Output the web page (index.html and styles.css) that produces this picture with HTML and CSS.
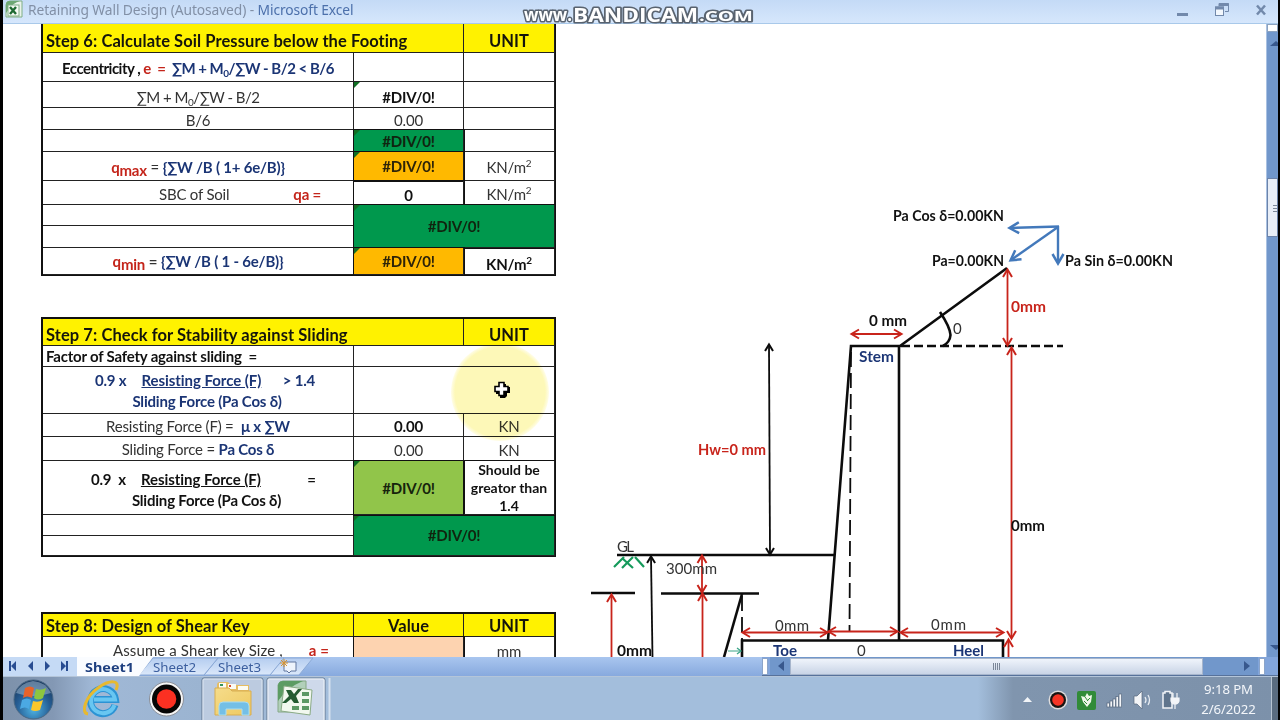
FILE: index.html
```
<!DOCTYPE html>
<html lang="en">
<head>
  <meta charset="UTF-8" />
  <title>Retaining Wall Design (Autosaved) - Microsoft Excel</title>
  <link rel="stylesheet" href="styles.css">
</head>
<body>

  <header class="titlebar">
    <svg class="app-icon" width="18" height="18" viewBox="0 0 18 18">
      <path d="M1 5 Q1 1 5 1 H17 V17 H1 Z" fill="#e9f3ea" stroke="#7fae86"/>
      <path d="M1 5 Q1 1 5 1 H15 Q8 3 4 9 L1 13 Z" fill="#6da874"/>
      <rect x="3" y="5" width="11" height="11" fill="#f5faf4" stroke="#7fae86"/>
      <path d="M5 7 L11 14 M11 7 L5 14" stroke="#1f6b33" stroke-width="2.4"/>
    </svg>
    <span class="title">Retaining Wall Design (Autosaved) - <b>Microsoft Excel</b></span>
    <svg class="window-buttons" width="96" height="24" viewBox="0 0 96 24">
      <rect x="3" y="13" width="11" height="3" fill="#7289ab"/>
      <g fill="none" stroke="#7289ab">
        <path d="M45 6.500 V3.500 H54.500 V11.500 H51"/>
        <path d="M45 4.500 H54.500" stroke-width="3"/>
        <rect x="41.500" y="7" width="8" height="8.500" fill="#f2f7fd"/>
        <path d="M41 8 H50" stroke-width="3"/>
        <path d="M83 5.500 L91 14.500 M91 5.500 L83 14.500" stroke-width="2.500"/>
      </g>
    </svg>
  </header>

  <svg class="watermark" width="240" height="28" viewBox="518 0 240 28">
    <text x="524" y="20.500" textLength="48" lengthAdjust="spacingAndGlyphs" font-size="17">www.</text>
    <text x="573" y="21.500" textLength="125" lengthAdjust="spacingAndGlyphs" font-size="19">BANDICAM</text>
    <text x="699" y="21" textLength="54" lengthAdjust="spacingAndGlyphs" font-size="15">.COM</text>
  </svg>

  <main class="workspace">
    <div class="sheet">

      <div class="tables">
        <section class="table step6">
          <div class="cell head wide2">Step 6: Calculate Soil Pressure below the Footing</div>
          <div class="cell head mid">UNIT</div>

          <div class="cell bold drop"><span class="ecc">Eccentricity , <i class="red">e&nbsp; =</i>&nbsp; <i class="navy">∑M + M<sub>0</sub>/∑W - B/2 &lt; B/6</i></span></div>
          <div class="cell"></div>
          <div class="cell"></div>

          <div class="cell drop3"><span class="ecc">∑M + M<sub>0</sub>/∑W - B/2</span></div>
          <div class="cell bold flag drop3">#DIV/0!</div>
          <div class="cell"></div>

          <div class="cell drop">B/6</div>
          <div class="cell drop">0.00</div>
          <div class="cell"></div>

          <div class="cell"></div>
          <div class="cell bold green flag boxed">#DIV/0!</div>
          <div class="cell"></div>

          <div class="cell drop"><span><b class="red q">q<sub>max</sub></b> = <b class="navy">{∑W /B ( 1+ 6e/B)}</b></span></div>
          <div class="cell bold orange flag boxed">#DIV/0!</div>
          <div class="cell drop"><span>KN/m<sup>2</sup></span></div>

          <div class="cell drop"><span class="sbc">SBC of Soil</span><b class="red">qa =</b></div>
          <div class="cell bold boxed drop3">0</div>
          <div class="cell drop"><span>KN/m<sup>2</sup></span></div>

          <div class="cell"></div>
          <div class="cell bold green flag merged boxed">#DIV/0!</div>
          <div class="cell"></div>

          <div class="cell"><span><b class="red q">q<sub>min</sub></b> <b>=</b> <b class="navy">{∑W /B ( 1 - 6e/B)}</b></span></div>
          <div class="cell bold orange flag boxed">#DIV/0!</div>
          <div class="cell bold low"><span>KN/m<sup>2</sup></span></div>
        </section>

        <section class="table step7">
          <div class="cell head wide2">Step 7: Check for Stability against Sliding</div>
          <div class="cell head mid">UNIT</div>

          <div class="cell bold left"><span>Factor of Safety against sliding&nbsp; =</span></div>
          <div class="cell wide2"></div>

          <div class="cell bold navy ratio">
            <span>0.9 x</span>
            <span class="fraction"><u>Resisting Force (F)</u><span>Sliding Force (Pa Cos δ)</span></span>
            <span class="limit">&gt; 1.4</span>
          </div>
          <div class="cell wide2"></div>

          <div class="cell drop"><span>Resisting Force (F) =&nbsp; <b class="navy">μ x ∑W</b></span></div>
          <div class="cell bold drop">0.00</div>
          <div class="cell drop">KN</div>

          <div class="cell"><span>Sliding Force = <b class="navy">Pa Cos δ</b></span></div>
          <div class="cell drop">0.00</div>
          <div class="cell drop">KN</div>

          <div class="cell bold ratio second">
            <span>0.9&nbsp; x</span>
            <span class="fraction"><u>Resisting Force (F)</u><span>Sliding Force (Pa Cos δ)</span></span>
            <span class="equals">=</span>
          </div>
          <div class="cell bold lime flag boxed">#DIV/0!</div>
          <div class="cell bold note boxed">Should be<br>greator than<br>1.4</div>

          <div class="cell"></div>
          <div class="cell bold green flag merged">#DIV/0!</div>
          <div class="cell"></div>
        </section>

        <section class="table step8">
          <div class="cell head">Step 8: Design of Shear Key</div>
          <div class="cell head mid">Value</div>
          <div class="cell head mid">UNIT</div>

          <div class="cell shear"><span>Assume a Shear key Size ,</span><b class="red">a =</b></div>
          <div class="cell peach boxed"></div>
          <div class="cell drop3">mm</div>
        </section>
      </div>

      <!-- retaining wall section -->
      <svg class="diagram" width="709" height="633" viewBox="557 24 709 633">
        <defs>
          <marker id="red" markerUnits="userSpaceOnUse" markerWidth="12" markerHeight="12" refX="9" refY="6" orient="auto-start-reverse" viewBox="0 0 12 12">
            <path d="M2 1.500 L9.500 6 L2 10.500" fill="none" stroke="#c8241b" stroke-width="2"/>
          </marker>
          <marker id="black" markerUnits="userSpaceOnUse" markerWidth="12" markerHeight="12" refX="9" refY="6" orient="auto-start-reverse" viewBox="0 0 12 12">
            <path d="M3 2 L9.500 6 L3 10" fill="none" stroke="#0c0c0c" stroke-width="2"/>
          </marker>
          <marker id="blue" markerUnits="userSpaceOnUse" markerWidth="14" markerHeight="14" refX="11" refY="7" orient="auto-start-reverse" viewBox="0 0 14 14">
            <path d="M2 1.500 L11.500 7 L2 12.500" fill="none" stroke="#4379bb" stroke-width="2.500"/>
          </marker>
          <marker id="teal" markerUnits="userSpaceOnUse" markerWidth="8" markerHeight="8" refX="6" refY="4" orient="auto" viewBox="0 0 8 8">
            <path d="M2 1 L6 4 L2 7" fill="none" stroke="#3aa487" stroke-width="1.300"/>
          </marker>
        </defs>

        <g class="wall">
          <path d="M1007 268 L900 346 H851 L828 640"/>
          <path d="M899 346 V640"/>
          <path d="M742 657 V640.500 H1003 V657"/>
          <path d="M617 555 H835 M591 593 H635 M661 593.500 H759"/>
          <path d="M742 594 L724 657"/>
          <path d="M940 312 Q950 327 950.500 335 Q950 342 943 346"/>
          <path d="M901 346 H1063" stroke-dasharray="9 4"/>
        </g>
        <path class="hidden-edge" d="M851 352 L849.500 632"/>
        <path class="hidden-edge" d="M742 596 V640"/>

        <g class="dim-red">
          <path d="M852 334 H901"/>
          <path d="M1007.500 270 V345"/>
          <path d="M1011.500 348 V638"/>
          <path d="M702 556 V592"/>
          <path d="M743 632.500 H827"/>
          <path d="M829 631.500 H897"/>
          <path d="M901 632.500 H1003"/>
        </g>
        <g class="dim-red one-end">
          <path d="M702.500 657 V594"/>
          <path d="M611.500 657 V595"/>
          <path d="M1008.500 657 V640"/>
        </g>
        <path class="dim-black" d="M769 345 L770 554" marker-start="url(#black)" marker-end="url(#black)"/>
        <path class="dim-black" d="M652.500 657 L651 557" marker-end="url(#black)"/>
        <path d="M728 651 H741" stroke="#3aa487" marker-end="url(#teal)"/>

        <g class="force">
          <path d="M1059 226.500 L1010 228"/>
          <path d="M1058 227 L1011 260"/>
          <path d="M1058 226 V263"/>
        </g>
        <path class="ground" d="M624 557 L614 567 M633 557 L622 568 M622 558 L633 568 M635 557 L644 567"/>

        <g class="labels">
          <text x="893" y="221" textLength="111" lengthAdjust="spacingAndGlyphs">Pa Cos δ=0.00KN</text>
          <text x="932" y="266" textLength="72" lengthAdjust="spacingAndGlyphs">Pa=0.00KN</text>
          <text x="1065" y="266" textLength="108" lengthAdjust="spacingAndGlyphs">Pa Sin δ=0.00KN</text>
          <text x="869" y="325.500" textLength="38" lengthAdjust="spacingAndGlyphs">0 mm</text>
          <text x="1011" y="531" textLength="34" lengthAdjust="spacingAndGlyphs">0mm</text>
          <text x="617" y="656" textLength="35" lengthAdjust="spacingAndGlyphs">0mm</text>
          <text class="t-red" x="1011" y="312" textLength="35" lengthAdjust="spacingAndGlyphs">0mm</text>
          <text class="t-red" x="698" y="455" textLength="68" lengthAdjust="spacingAndGlyphs">Hw=0 mm</text>
          <text class="t-navy" x="859" y="362" textLength="35" lengthAdjust="spacingAndGlyphs">Stem</text>
          <text class="t-navy" x="773" y="656" textLength="24" lengthAdjust="spacingAndGlyphs">Toe</text>
          <text class="t-navy" x="953" y="656" textLength="31" lengthAdjust="spacingAndGlyphs">Heel</text>
          <text class="plain" x="953" y="334">0</text>
          <text class="plain" x="617" y="552" textLength="17">GL</text>
          <text class="plain" x="666" y="574" textLength="51">300mm</text>
          <text class="plain" x="775" y="631" textLength="34">0mm</text>
          <text class="plain" x="931" y="630" textLength="35">0mm</text>
          <text class="plain" x="857" y="656">0</text>
        </g>
      </svg>

      <div class="halo"></div>
      <svg class="cursor" width="18" height="18" viewBox="0 0 18 18">
        <path d="M7 3 H13 V6 H17 V12 H14 V15 L12 17 H7 V13 H3 V7 H7 Z" fill="#000"/>
        <path d="M6 1.500 H11 V5.500 H15 V10.500 H11 V14.500 H6 V10.500 H2 V5.500 H6 Z" fill="#fff" stroke="#000" stroke-width="1.600"/>
      </svg>
    </div>

    <div class="vscroll">
      <div class="split"></div>
      <div class="up"></div>
      <div class="vthumb"><i></i><i></i><i></i></div>
      <div class="down"></div>
    </div>
  </main>

  <nav class="tabbar">
    <svg class="tabs" width="759" height="19" viewBox="3 657 759 19">
      <defs>
        <linearGradient id="tab" x1="0" y1="0" x2="0" y2="1">
          <stop offset="0" stop-color="#b5cdf0"/>
          <stop offset="1" stop-color="#dbe8fa"/>
        </linearGradient>
      </defs>
      <rect x="3" y="657" width="74" height="19" fill="#c5daf5"/>
      <g fill="url(#tab)" stroke="#8ba9d6">
        <path d="M270 675 L283 658 H313 L299 675 Z"/>
        <path d="M204 675 L218 658 H284 L270 675 Z"/>
        <path d="M139 675 L153 658 H218 L204 675 Z"/>
      </g>
      <path d="M77 657 H153 L139 676 H77 Z" fill="#fafcff"/>
      <g fill="#284c91">
        <path d="M9 661 H11 V671 H9 Z M16 661 V671 L11 666 Z"/>
        <path d="M33 661 V671 L28 666 Z"/>
        <path d="M45 661 V671 L50 666 Z"/>
        <path d="M61 661 V671 L66 666 Z M66 661 H68 V671 H66 Z"/>
      </g>
      <path d="M284 662 H296 V671 H291 L289 673 L287 671 H284 Z" fill="#eef4fc" stroke="#61769f"/>
      <path d="M284 659 V667 M280 663 H288 M281 660 L287 666 M287 660 L281 666" stroke="#d7932e"/>
      <text class="current" x="85" y="671.500" textLength="49" lengthAdjust="spacingAndGlyphs">Sheet1</text>
      <text x="153" y="671.500" textLength="43" lengthAdjust="spacingAndGlyphs">Sheet2</text>
      <text x="218" y="671.500" textLength="43" lengthAdjust="spacingAndGlyphs">Sheet3</text>
    </svg>
    <div class="tab-split"></div>
    <div class="hscroll">
      <span class="arrow-left"></span>
      <div class="hthumb"><i></i><i></i><i></i><i></i></div>
      <span class="arrow-right"></span>
    </div>
    <div class="end-split"></div>
  </nav>

  <footer class="taskbar">
    <svg class="launchers" width="330" height="44" viewBox="3 676 330 44">
      <defs>
        <radialGradient id="orb" cx=".5" cy=".75" r=".7">
          <stop offset="0" stop-color="#4fb4e4"/>
          <stop offset=".6" stop-color="#265f96"/>
          <stop offset="1" stop-color="#1b3c63"/>
        </radialGradient>
        <linearGradient id="folder" x1="0" y1="0" x2="1" y2="1">
          <stop offset="0" stop-color="#f5dc8b"/>
          <stop offset="1" stop-color="#efc95f"/>
        </linearGradient>
      </defs>

      <circle cx="33.500" cy="698.500" r="19.500" fill="url(#orb)" stroke="#496783"/>
      <path d="M16 692 Q20 682 33 680 Q46 681 51 692 Q33 698 16 692" fill="#b8cfdf" opacity=".45"/>
      <path d="M25 687 Q30 684 34 687 L32 697 Q27 694 23 697 Z" fill="#e7632a"/>
      <path d="M36 688 Q41 690 46 687 L43 697 Q38 700 34 697 Z" fill="#8dc63f"/>
      <path d="M22 699 Q27 696 31 699 L29 708 Q25 705 20 708 Z" fill="#4ba9e3"/>
      <path d="M33 700 Q38 702 43 699 L40 709 Q35 711 31 709 Z" fill="#fcc72c"/>

      <path d="M115 704 A12.500 12.500 0 1 1 115.500 698.500 H94" fill="none" stroke="#2c93d4" stroke-width="7"/>
      <path d="M114.500 704 A12 12 0 1 1 115 698.500 H94" fill="none" stroke="#68c6f1" stroke-width="4"/>
      <path d="M88 713 C80 712 86 695 98 687 C109 679 121 678 116 689" fill="none" stroke="#e7b92f" stroke-width="3"/>

      <circle cx="166.500" cy="698" r="17" fill="#f5f5f5" stroke="#8b8f98"/>
      <circle cx="166.500" cy="698" r="14.500" fill="#050505"/>
      <circle cx="166.500" cy="698" r="9.800" fill="#fb3022"/>

      <rect x="202" y="677" width="61" height="46" rx="2" fill="#bccbe0" stroke="#63778f"/>
      <rect x="203" y="678" width="59" height="45" rx="1" fill="none" stroke="#dde7f2"/>
      <rect x="267" y="677" width="58" height="46" rx="2" fill="#ced9ea" stroke="#63778f"/>
      <rect x="268" y="678" width="56" height="45" rx="1" fill="none" stroke="#eff4fa"/>
      <path d="M329.500 677 V720" stroke="#d5e1ef" stroke-width="2"/>

      <path d="M217 684 Q217 681 220 681 H228 L231 684 H249 V712 H217 Z" fill="#e6bd62"/>
      <path d="M219 682 H226 V687 H219 Z M228 683 H236 V688 H228 Z M238 685 H248 V689 H238 Z" fill="#fbfbf3"/>
      <path d="M220 684 H223" stroke="#35945c" stroke-width="2"/>
      <path d="M229 685 H231" stroke="#d64c32" stroke-width="2"/>
      <path d="M215 687 H229 L232 690 H251 V714 H215 Z" fill="url(#folder)" stroke="#d8ad51"/>
      <path d="M219 714 V705 Q219 701 223 701 H245 Q249 701 249 705 V714 H242 V708 H226 V714 Z" fill="#74bfe6" stroke="#a7dcf3"/>

      <path d="M278 684 Q279 680 283 680 H306 V711 H278 Z" fill="#a6cda6" opacity=".7" stroke="#68945f"/>
      <path d="M278 684 Q279 680 283 680 H303 Q288 686 278 700 Z" fill="#5c9c63"/>
      <path d="M284 685 L312 689 L310 714 L281 710 Z" fill="#f2f8ef" stroke="#8bab86"/>
      <path d="M286 689 H291 L294 693 L298 688 H302 L296 695 L299 702 H294 L291 698 L286 702 H282 L289 695 Z" fill="#245b31"/>
      <g fill="#5c9865">
        <rect x="302" y="691" width="7" height="4"/>
        <rect x="302" y="698" width="7" height="4"/>
        <rect x="292" y="705" width="7" height="4"/>
        <rect x="302" y="705" width="7" height="4"/>
      </g>
    </svg>

    <svg class="tray" width="160" height="44" viewBox="1020 676 160 44">
      <path d="M1023 701 L1027.500 696 L1032 701 Z" fill="#f2f5f8"/>
      <circle cx="1058" cy="699" r="9.500" fill="#dedcdc"/>
      <circle cx="1058" cy="699" r="8" fill="#181413"/>
      <circle cx="1058" cy="699" r="5.800" fill="#f53425"/>
      <rect x="1077" y="690" width="19" height="19" rx="2" fill="#318b38"/>
      <path d="M1081 695 L1085 696 L1087 692 L1089 695 L1092 694 L1091 701 L1087 706 L1083 701 Z" fill="#eff7e9"/>
      <path d="M1085 696 L1088 700 M1084 700 L1087 703 M1090 697 L1087 700" stroke="#318b38"/>
      <g fill="#f3f5f8" stroke="#56677d" stroke-width=".7">
        <rect x="1107" y="702" width="2.600" height="4"/>
        <rect x="1110" y="700" width="2.600" height="6"/>
        <rect x="1113" y="698" width="2.600" height="8"/>
        <rect x="1116" y="695.500" width="2.600" height="10.500"/>
        <rect x="1119" y="693" width="2.600" height="13"/>
        <path d="M1134 695 H1137 L1142 690 V708 L1137 703 H1134 Z"/>
      </g>
      <g fill="none" stroke="#e7ecf2" stroke-width="1.300">
        <path d="M1145 696 Q1147 699 1145 702"/>
        <path d="M1148 694 Q1151 699 1148 704"/>
      </g>
      <path d="M1163 692 H1165 V690.500 H1170 V692 H1172 V707 H1163 Z" fill="#60758d" stroke="#f1f4f7" stroke-width="1.500"/>
      <path d="M1173 692 V697 M1177 692 V697 M1171 697 H1179 V700 Q1178 703 1175 703 Q1172 703 1171 700 Z M1175 703 V708" fill="#f3f5f8" stroke="#f3f5f8" stroke-width="1.200"/>
    </svg>
    <div class="clock"><span>9:18 PM</span><span class="date">2/6/2022</span></div>
    <div class="show-desktop"></div>
  </footer>

</body>
</html>
```
FILE: styles.css
```
* {
  box-sizing: border-box;
}

body {
  margin: 0;
  width: 1280px;
  height: 720px;
  overflow: hidden;
  display: flex;
  flex-direction: column;
  position: relative;
  border-left: 3px solid #000;
  border-right: 2px solid #000;
  background: #fff;
  font-family: Lato, "Open Sans", sans-serif;
  font-size: 15px;
  font-variant-ligatures: none;
  color: #333;
}

i {
  font-style: normal;
}

/* title bar */
.titlebar {
  height: 24px;
  flex: none;
  display: flex;
  align-items: flex-start;
  background: linear-gradient(#c4daf6, #d6e7fc);
  border-bottom: 1px solid #a9c9ea;
}

.app-icon {
  margin: 0 0 0 2px;
}

.title {
  margin-left: 5px;
  font-family: "Noto Sans", "Open Sans", sans-serif;
  font-size: 13.8px;
  line-height: 20px;
  letter-spacing: -0.1px;
  color: #8290a6;
  white-space: nowrap;
}

.title b {
  font-weight: normal;
  color: #4c70ab;
}

.window-buttons {
  margin-left: auto;
  margin-right: 8px;
}

.watermark {
  position: absolute;
  left: 515px;
  top: 0;
  font-family: "Open Sans", sans-serif;
  font-weight: bold;
  fill: #fff;
  stroke: #59636f;
  stroke-width: 3px;
  stroke-linejoin: round;
  paint-order: stroke;
}

/* worksheet */
.workspace {
  height: 633px;
  flex: none;
  display: flex;
}

.sheet {
  width: 1263px;
  display: flex;
  position: relative;
  overflow: hidden;
}

.tables {
  width: 514px;
  margin-left: 38px;
  flex: none;
  letter-spacing: -0.2px;
}

.diagram {
  margin-left: 2px;
  flex: none;
}

.table {
  display: grid;
  grid-template-columns: 311px 110px 91px;
  border: 2px solid #111;
  border-right: 0;
  border-bottom-width: 1px;
  width: 515px;
  border-right: 1px solid #111;
}

.step6 {
  grid-template-rows: 29px 29px 26px 22px 22px 29px 24px 21px 22px 27px;
  border-top: 0;
  margin-bottom: 41px;
}

.step7 {
  grid-template-rows: 27px 21px 47px 23px 24px 54px 21px 20px;
  margin-bottom: 55px;
}

.step8 {
  grid-template-rows: 23px 24px;
}

.cell {
  display: flex;
  align-items: center;
  justify-content: center;
  white-space: nowrap;
  border-right: 1px solid #222;
  border-bottom: 1px solid #222;
  min-width: 0;
  min-height: 0;
  line-height: 18px;
  position: relative;
}

.bold {
  font-weight: bold;
  color: #111;
}

.head {
  background: #fff200;
  color: #15150c;
  font-weight: bold;
  font-size: 16.5px;
  letter-spacing: 0.08px;
  padding: 6px 0 0 3px;
  justify-content: flex-start;
}

.step8 .head {
  padding-top: 1px;
}

.mid {
  justify-content: center;
  padding-left: 0;
}

.left {
  justify-content: flex-start;
  padding-left: 3px;
}

.drop {
  padding-top: 2px;
}

.drop3 {
  padding-top: 4px;
}

.low {
  padding-top: 5px;
}

.wide2 {
  grid-column: span 2;
}

.merged {
  grid-column: 2 / span 2;
  grid-row: span 2;
}

.boxed {
  outline: 1px solid #111;
  outline-offset: -0.5px;
  z-index: 1;
}

.green {
  background: #00984d;
  color: #10240f;
}

.orange {
  background: #ffb900;
  color: #2e2408;
}

.lime {
  background: #91c54a;
  color: #16240c;
}

.peach {
  background: #fdd3b0;
}

.flag::before {
  content: "";
  position: absolute;
  left: 0;
  top: 0;
  border-top: 6px solid #117024;
  border-right: 6px solid transparent;
}

.red {
  color: #c4251b;
}

.navy {
  color: #1b3575;
}

sub, sup {
  font-size: 10px;
  line-height: 0;
}

.cell .q sub {
  font-size: 15px;
  vertical-align: -3px;
}

.ecc {
  letter-spacing: -0.5px;
}

.ecc sub {
  vertical-align: -3px;
}

.sbc {
  margin: 0 64px 0 84px;
}

.ratio {
  align-items: flex-start;
  justify-content: flex-start;
  padding: 3px 0 0 52px;
  gap: 6px;
  line-height: 20.5px;
}

.ratio.second {
  padding: 8px 0 0 48px;
}

.fraction {
  display: flex;
  flex-direction: column;
  align-items: flex-start;
}

.fraction u {
  margin-left: 9px;
  letter-spacing: -0.05px;
}

.limit {
  margin-left: -5px;
}

.equals {
  margin-left: 20px;
}

.note {
  font-size: 14px;
  letter-spacing: 0;
  text-align: center;
}

.shear {
  gap: 26px;
  padding: 3px 0 0 46px;
  letter-spacing: 0.1px;
}

.halo {
  position: absolute;
  left: 448px;
  top: 319px;
  width: 98px;
  height: 98px;
  border-radius: 50%;
  background: radial-gradient(closest-side, #fdf8b8 92%, #fffde9);
  mix-blend-mode: multiply;
}

.cursor {
  position: absolute;
  left: 490px;
  top: 357px;
}

/* diagram */
.wall {
  fill: none;
  stroke: #0c0c0c;
  stroke-width: 2.6px;
}

.hidden-edge {
  fill: none;
  stroke: #0c0c0c;
  stroke-width: 1.8px;
  stroke-dasharray: 15 6;
}

.dim-red {
  fill: none;
  stroke: #c8241b;
  stroke-width: 1.8px;
}

.dim-red path {
  marker-start: url(#red);
  marker-end: url(#red);
}

.one-end path {
  marker-start: none;
}

.dim-black {
  stroke: #0c0c0c;
  stroke-width: 1.8px;
}

.force {
  stroke: #4379bb;
  stroke-width: 2.4px;
}

.force path {
  marker-end: url(#blue);
}

.ground {
  stroke: #159a5b;
  stroke-width: 2.2px;
}

.labels {
  font-size: 14.8px;
  font-weight: bold;
  fill: #111;
}

.labels .plain {
  font-size: 15px;
  font-weight: normal;
  fill: #333;
}

.t-red {
  fill: #c8241b;
}

.t-navy {
  fill: #1b3575;
}

/* scrollbars */
.vscroll {
  flex: 1;
  background: #7197cb;
  border-left: 1px solid #a9c1e2;
  overflow: hidden;
}

.split {
  height: 8px;
  background: #fff;
  border: 1px solid #8ca2bf;
}

.up, .down {
  width: 0;
  height: 0;
  margin-left: 3px;
  border-left: 6px solid transparent;
  border-right: 6px solid transparent;
}

.up {
  margin-top: 9px;
  border-bottom: 5px solid #38588d;
}

.down {
  margin-top: 408px;
  border-top: 5px solid #38588d;
}

.vthumb {
  height: 59px;
  margin-top: 132px;
  padding: 26px 0 0 5px;
  background: #e8eef7;
  border: 1px solid #6c83a9;
}

.vthumb i {
  display: block;
  height: 1px;
  margin-bottom: 2px;
  background: #7b8798;
}

.tabbar {
  height: 19px;
  flex: none;
  display: flex;
  background: #82a5db;
  border-bottom: 1px solid #57729b;
}

.tabs {
  flex: none;
  background: linear-gradient(#a9c6ef, #87a9de);
  font-family: "Noto Sans", "Open Sans", sans-serif;
  font-size: 13px;
  fill: #3c5f9f;
}

.current {
  font-weight: bold;
  fill: #1f4080;
}

.tab-split, .end-split {
  width: 6px;
  margin: 1px 2px 0 0;
  background: #fff;
  border: 1px solid #8ba4c9;
}

.hscroll {
  width: 488px;
  display: flex;
  align-items: center;
  background: #7197cb;
}

.arrow-left {
  margin: 0 6px 0 8px;
  border-top: 5px solid transparent;
  border-bottom: 5px solid transparent;
  border-right: 6px solid #38588d;
}

.arrow-right {
  margin-left: 41px;
  border-top: 5px solid transparent;
  border-bottom: 5px solid transparent;
  border-left: 6px solid #38588d;
}

.hthumb {
  width: 413px;
  height: 17px;
  display: flex;
  align-items: center;
  justify-content: center;
  gap: 1px;
  background: linear-gradient(#eff4fb, #c9d4e6);
  border: 1px solid #a6b5cc;
}

.hthumb i {
  width: 1px;
  height: 7px;
  background: #7b8798;
}

.end-split {
  margin-left: 1px;
}

/* taskbar */
.taskbar {
  height: 44px;
  flex: none;
  display: flex;
  background: linear-gradient(90deg, #7d91aa 0, #8398b4 50px, #a0b8d6 90px, #9bb4d1 200px, #a3bedc 330px, #a3bedc 975px, #8095ae 1010px, #7c91aa 100%);
  border-top: 1px solid #b4c5d9;
}

.launchers {
  flex: none;
}

.tray {
  margin-left: 687px;
  flex: none;
}

.clock {
  width: 91px;
  display: flex;
  flex-direction: column;
  align-items: center;
  padding: 2px 0 0 6px;
  font-family: "Noto Sans", "Open Sans", sans-serif;
  font-size: 13.2px;
  line-height: 20px;
  color: #f3f6fa;
  letter-spacing: -0.1px;
}

.show-desktop {
  flex: 1;
  background: #5a6c80;
  border-left: 1px solid #b6c3d1;
}
```
